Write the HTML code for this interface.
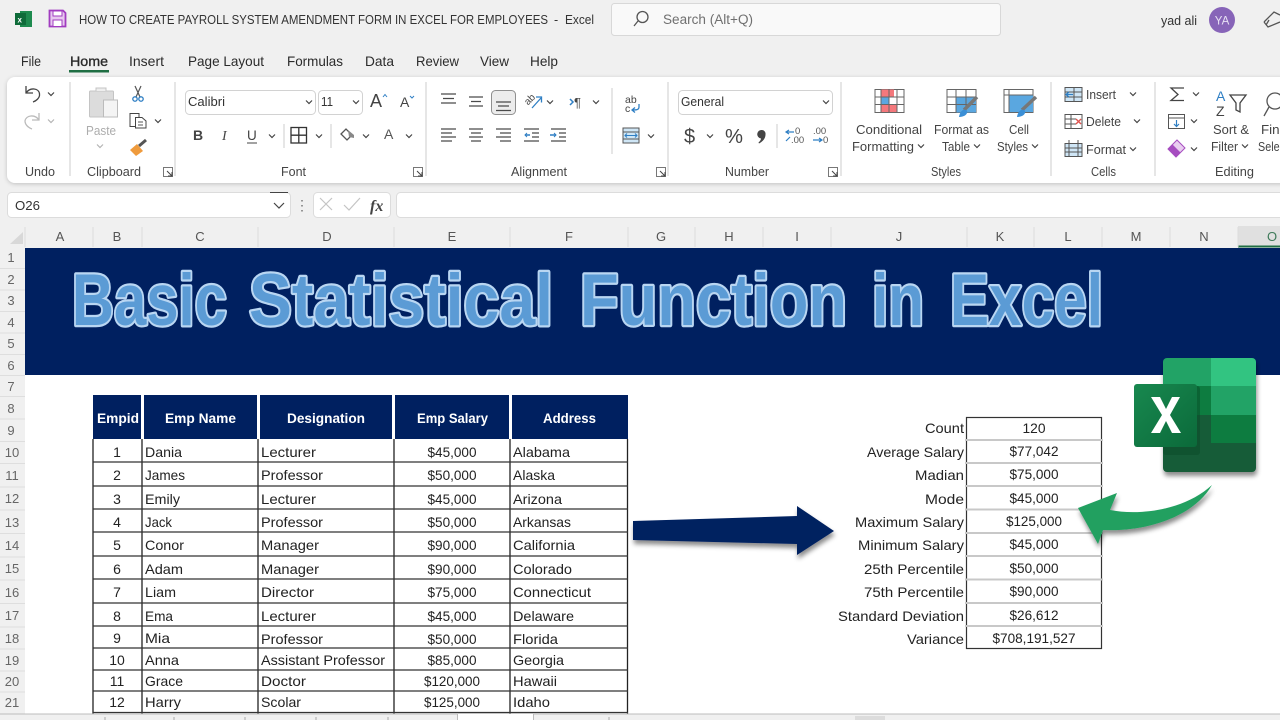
<!DOCTYPE html>
<html><head><meta charset="utf-8"><title>Excel</title>
<style>
html,body{margin:0;padding:0;width:1280px;height:720px;overflow:hidden;background:#fff}
svg{display:block;position:absolute;left:0;top:0}
text{font-family:"Liberation Sans",sans-serif;font-size:13px;fill:#333}
.t{font-size:14px;fill:#2b2b2b}
.r{font-size:12.5px;fill:#444}
.l{font-size:12.5px;fill:#444}
.h{font-size:13px;fill:#555;text-anchor:middle}
.n{font-size:13px;fill:#666;text-anchor:middle}
.d{font-size:14px;fill:#222}
.m{font-size:14px;fill:#222;text-anchor:middle}
.e{font-size:14px;fill:#222;text-anchor:end}
.w{font-size:14px;font-weight:bold;fill:#fff}
.ti{font-size:73px;font-weight:bold;fill:#5b9bd5;stroke:#b9d6f2;stroke-width:4.500px;paint-order:stroke;stroke-linejoin:round}
.ic{fill:none;stroke:#555;stroke-width:1.3}
.bl{fill:none;stroke:#444;stroke-width:1.3}
</style></head><body>
<svg width="1280" height="720" viewBox="0 0 1280 720" xmlns="http://www.w3.org/2000/svg">
<defs>
<path id="c" d="M-3-1.500 0 1.500 3-1.500" fill="none" stroke="#444" stroke-width="1.200"/>
<g id="dl"><path d="M-4.500-4.500H4.500V4.500H-4.500Z" fill="none" stroke="#777"/><path d="M-1-1 4 4M4 0V4H0" fill="none" stroke="#444"/></g>
<filter id="s1" x="-20%" y="-20%" width="140%" height="160%"><feDropShadow dx="1" dy="4" stdDeviation="2.500" flood-color="#000" flood-opacity=".45"/></filter>
<filter id="s3" x="-5%" y="-20%" width="110%" height="140%"><feDropShadow dx="0" dy="1" stdDeviation="2" flood-color="#000" flood-opacity=".2"/></filter>
<linearGradient id="xg" x1="0" y1="0" x2="1" y2="1"><stop offset="0" stop-color="#18884f"/><stop offset="1" stop-color="#0b6a3a"/></linearGradient>
</defs>

<!-- window background -->
<rect width="1280" height="248" fill="#f0f0f0"/>

<!-- title bar -->
<rect x="20" y="11" width="12" height="16" fill="#1d8a4e"/><rect x="15" y="13" width="11" height="12" fill="#0e6b39"/>
<text x="17.500" y="22.500" style="font-size:8px;font-weight:bold;fill:#fff">x</text>
<path d="M49.500 10.500H63L65.500 13V26.500H49.500Z" fill="#e7c8ef" stroke="#a13cc0" stroke-width="1.800"/>
<rect x="53" y="11" width="9" height="5" fill="#fff" stroke="#a13cc0"/><rect x="53" y="20" width="9" height="6.500" fill="#fff" stroke="#a13cc0"/>
<text x="79" y="24" textLength="469" lengthAdjust="spacingAndGlyphs" style="font-size:12.500px;fill:#333">HOW TO CREATE PAYROLL SYSTEM AMENDMENT FORM IN EXCEL FOR EMPLOYEES</text>
<text x="554" y="24" style="font-size:12.500px;fill:#333">-</text>
<text x="565" y="24" textLength="29" lengthAdjust="spacingAndGlyphs" style="font-size:12.500px;fill:#333">Excel</text>
<rect x="611.500" y="3.500" width="389" height="32" rx="3" fill="#f9f9f9" stroke="#d8d8d8"/>
<circle cx="642.500" cy="17" r="5.500" class="ic"/><path d="M638 21 634 26" class="ic"/>
<text x="663" y="24" textLength="90" lengthAdjust="spacingAndGlyphs" style="font-size:13.500px;fill:#707070">Search (Alt+Q)</text>
<text x="1161" y="25" textLength="36" lengthAdjust="spacingAndGlyphs" style="font-size:12.500px;fill:#333">yad ali</text>
<circle cx="1222" cy="20" r="13" fill="#8764b8"/>
<text x="1222" y="24.500" text-anchor="middle" style="font-size:11.500px;fill:#e8e0f4">YA</text>
<path d="M1264 22 1274 12 1280 15M1264 22 1268 27 1280 22M1266 25 1269 20" class="ic"/>

<!-- tabs -->
<text x="21" y="66" class="t" textLength="20" lengthAdjust="spacingAndGlyphs">File</text>
<text x="70" y="66" class="t" textLength="38" lengthAdjust="spacingAndGlyphs" style="stroke:#2b2b2b;stroke-width:.35px">Home</text>
<rect x="69" y="70" width="40" height="2.500" fill="#1f6e43"/>
<text x="129" y="66" class="t" textLength="35" lengthAdjust="spacingAndGlyphs">Insert</text>
<text x="188" y="66" class="t" textLength="76" lengthAdjust="spacingAndGlyphs">Page Layout</text>
<text x="287" y="66" class="t" textLength="56" lengthAdjust="spacingAndGlyphs">Formulas</text>
<text x="365" y="66" class="t" textLength="29" lengthAdjust="spacingAndGlyphs">Data</text>
<text x="416" y="66" class="t" textLength="43" lengthAdjust="spacingAndGlyphs">Review</text>
<text x="480" y="66" class="t" textLength="29" lengthAdjust="spacingAndGlyphs">View</text>
<text x="530" y="66" class="t" textLength="28" lengthAdjust="spacingAndGlyphs">Help</text>

<!-- ribbon panel -->
<rect x="7" y="77" width="1290" height="106" rx="8" fill="#fff" filter="url(#s3)"/>
<g stroke="#d6d6d6" stroke-width="1.200">
<path d="M70 82V176M175 82V176M426 82V176M668 82V176M841 82V176M1051 82V176M1155 82V176"/>
<path d="M284 124V148M331 124V148M612 88V154M777 124V148"/></g>

<!-- ribbon labels -->
<text x="25" y="176" class="l" textLength="30" lengthAdjust="spacingAndGlyphs">Undo</text>
<text x="87" y="176" class="l" textLength="54" lengthAdjust="spacingAndGlyphs">Clipboard</text>
<text x="281" y="176" class="l" textLength="25" lengthAdjust="spacingAndGlyphs">Font</text>
<text x="511" y="176" class="l" textLength="56" lengthAdjust="spacingAndGlyphs">Alignment</text>
<text x="725" y="176" class="l" textLength="44" lengthAdjust="spacingAndGlyphs">Number</text>
<text x="931" y="176" class="l" textLength="30" lengthAdjust="spacingAndGlyphs">Styles</text>
<text x="1091" y="176" class="l" textLength="25" lengthAdjust="spacingAndGlyphs">Cells</text>
<text x="1215" y="176" class="l" textLength="39" lengthAdjust="spacingAndGlyphs">Editing</text>
<use href="#dl" x="168" y="172"/><use href="#dl" x="418" y="172"/><use href="#dl" x="661" y="172"/><use href="#dl" x="833" y="172"/>

<!-- undo -->
<path d="M26 86V93H33M26 93C30 87 39 88 39.500 94C40 98 36 101 33 102" class="bl"/>
<use href="#c" x="51" y="94"/>
<path d="M39 113V120H32M39 120C35 114 26 115 25 121C25 125 29 128 32 129" fill="none" stroke="#bbb" stroke-width="1.300"/>
<use href="#c" x="51" y="121" opacity=".4"/>

<!-- clipboard -->
<rect x="89.500" y="91" width="24" height="26" rx="1" fill="#dcdcdc" stroke="#c4c4c4"/>
<path d="M96 91V88H106V91" fill="#eee" stroke="#c4c4c4"/>
<rect x="103.500" y="100" width="14" height="17" fill="#f4f4f4" stroke="#bbb"/>
<text x="86" y="135" textLength="30" lengthAdjust="spacingAndGlyphs" style="font-size:12.500px;fill:#adadad">Paste</text>
<use href="#c" x="100" y="146" opacity=".4"/>
<path d="M135 86 140 97M141 86 136 97" stroke="#555" fill="none" stroke-width="1.200"/>
<circle cx="135" cy="99" r="2.200" fill="none" stroke="#2f7fc4" stroke-width="1.300"/><circle cx="141" cy="99" r="2.200" fill="none" stroke="#2f7fc4" stroke-width="1.300"/>
<rect x="130" y="113.500" width="9" height="13" fill="#fff" stroke="#444"/><path d="M135.500 117.500H142L146 121V128H135.500Z" fill="#fff" stroke="#444"/>
<path d="M138 122H143M138 125H143" stroke="#555"/>
<use href="#c" x="158" y="121"/>
<path d="M130 150 137 144 143 151 136 156Z" fill="#ef9b3d"/><path d="M139 146 146 140" stroke="#555" stroke-width="3"/>

<!-- font -->
<rect x="185.500" y="90.500" width="130" height="24" rx="4" fill="#fff" stroke="#d2d2d2"/>
<rect x="318.500" y="90.500" width="44" height="24" rx="4" fill="#fff" stroke="#d2d2d2"/>
<text x="188" y="106" textLength="37" lengthAdjust="spacingAndGlyphs" style="font-size:12.500px;fill:#333">Calibri</text>
<text x="321" y="106" textLength="12" lengthAdjust="spacingAndGlyphs" style="font-size:12.500px;fill:#333">11</text>
<use href="#c" x="309" y="102"/><use href="#c" x="356" y="102"/>
<text x="370" y="107" style="font-size:18px;fill:#444">A</text><path d="M383 97 385 94.500 387 97" fill="none" stroke="#2f7fc4"/>
<text x="400" y="107" style="font-size:14px;fill:#444">A</text><path d="M410 96 412 98 414 96" fill="none" stroke="#2f7fc4"/>
<text x="193" y="140" style="font-size:14px;font-weight:bold;fill:#444">B</text>
<text x="222" y="140" style="font-size:14px;font-style:italic;font-family:'Liberation Serif',serif;fill:#444">I</text>
<text x="247" y="140" style="font-size:13.500px;fill:#444">U</text><path d="M247 143H257" stroke="#444"/>
<use href="#c" x="272" y="136"/>
<rect x="291" y="127.500" width="15.500" height="15.500" fill="none" stroke="#333" stroke-width="1.300"/><path d="M298.800 127.500V143M291 135.200H306.500" stroke="#333" stroke-width="1.300"/>
<use href="#c" x="319" y="136"/>
<path d="M341 134 346 129 352 135 347 140Z" class="ic"/><path d="M348 130 354 135V138L349 137Z" fill="#888"/>
<use href="#c" x="366" y="136"/>
<text x="384" y="139" style="font-size:14px;fill:#555">A</text>
<use href="#c" x="409" y="136"/>

<!-- alignment -->
<rect x="491.500" y="90.500" width="24" height="24" rx="4" fill="#ececec" stroke="#8f8f8f"/>
<g stroke="#4a4a4a" stroke-width="1.200">
<path d="M441 94H456M443 98.500H454M441 103H456"/>
<path d="M469 97H483M471 101.500H481M469 106H483"/>
<path d="M496 102H511M498 106H509M496 110.500H511"/>
<path d="M441 129H456M441 133H452M441 137H456M441 141H452"/>
<path d="M469 129H483M471 133H481M469 137H483M471 141H481"/>
<path d="M496 129H511M500 133H511M496 137H511M500 141H511"/>
<path d="M524 129H539M532 133H539M532 137H539M524 141H539"/>
<path d="M551 129H566M559 133H566M559 137H566M551 141H566"/>
</g>
<path d="M525 135H530M550 135H556" stroke="#2f7fc4" stroke-width="1.500"/>
<path d="M527 133 525 135 527 137M554 133 556 135 554 137" fill="none" stroke="#2f7fc4"/>
<text x="524" y="104" style="font-size:10px;fill:#444" transform="rotate(-45 528 100)">ab</text>
<path d="M532 108 541 98M536 97H541.500V102.500" fill="none" stroke="#2f7fc4" stroke-width="1.300"/>
<use href="#c" x="550" y="102"/>
<path d="M570 99 573 102 570 105" fill="none" stroke="#2f7fc4" stroke-width="1.500"/>
<text x="574" y="107" style="font-size:13px;fill:#444">¶</text>
<use href="#c" x="596" y="102"/>
<text x="625" y="103" style="font-size:10.500px;fill:#444">ab</text><text x="625" y="112" style="font-size:10.500px;fill:#444">c</text>
<path d="M639 104V107C639 110 636 110 632 110M635 107.500 632 110 635 112.500" fill="none" stroke="#2f7fc4" stroke-width="1.300"/>
<rect x="623" y="128" width="16" height="15" fill="#cfe6f6" stroke="#555"/>
<path d="M623 132H639M623 139H639" stroke="#555"/><path d="M625 135.500H637M627 133.500 625 135.500 627 137.500M635 133.500 637 135.500 635 137.500" fill="none" stroke="#2f7fc4"/>
<use href="#c" x="651" y="136"/>

<!-- number -->
<rect x="678.500" y="90.500" width="154" height="24" rx="4" fill="#fff" stroke="#d2d2d2"/>
<text x="681" y="106" textLength="43" lengthAdjust="spacingAndGlyphs" style="font-size:13px;fill:#333">General</text>
<use href="#c" x="826" y="102"/>
<text x="684" y="143" style="font-size:20px;fill:#444">$</text><use href="#c" x="710" y="136"/>
<text x="725" y="143" textLength="18" lengthAdjust="spacingAndGlyphs" style="font-size:20px;fill:#444">%</text>
<path d="M762 130A3.800 3.800 0 0 1 765.500 134.500C765.500 139 762 142 759 143.500L758.500 142.500C760 141 761 140 761 138.500A4 4 0 0 1 762 130Z" fill="#444"/>
<path d="M794 132H786M789 130 786 132 789 134M786 141 790 137" fill="none" stroke="#2f7fc4" stroke-width="1.200"/>
<text x="795" y="134" style="font-size:9.500px;fill:#555">0</text><text x="791" y="143" style="font-size:9.500px;fill:#555">.00</text>
<text x="813" y="134" style="font-size:9.500px;fill:#555">.00</text><text x="823" y="143" style="font-size:9.500px;fill:#555">0</text>
<path d="M813 140H822M819 138 822 140 819 142" fill="none" stroke="#2f7fc4" stroke-width="1.200"/>

<!-- styles -->
<rect x="875" y="89.500" width="29" height="23" fill="#fff" stroke="#666"/>
<path d="M881 89.500H894V97H881ZM881 104H897V112H881Z" fill="#f4787c"/><rect x="881" y="97" width="8" height="7" fill="#5aa7e0"/>
<path d="M881 89.500V112.500M889 89.500V112.500M897 89.500V112.500M875 97H904M875 104.500H904" stroke="#666" fill="none"/>
<rect x="947" y="89.500" width="29" height="23" fill="#fff" stroke="#666"/>
<rect x="956" y="97" width="20" height="15.500" fill="#5aa7e0"/>
<path d="M956 89.500V112.500M966 89.500V112.500M947 97H976M947 104.500H976" stroke="#666" fill="none"/>
<path d="M977 97 964 110" stroke="#777" stroke-width="3.500"/><path d="M959 117C960 110 965 108 967 111 968 115 963 117 959 117Z" fill="#3a8fd6"/>
<rect x="1004" y="89.500" width="29" height="23" fill="#fff" stroke="#666"/>
<rect x="1009" y="95" width="24" height="17" fill="#5aa7e0"/>
<path d="M1004 95H1033M1009 89.500V112.500" stroke="#666" fill="none"/>
<path d="M1036 97 1022 110" stroke="#777" stroke-width="3.500"/><path d="M1017 117C1018 110 1023 108 1025 111 1026 115 1021 117 1017 117Z" fill="#3a8fd6"/>
<text x="856" y="134" class="r" textLength="66" lengthAdjust="spacingAndGlyphs">Conditional</text>
<text x="852" y="151" class="r" textLength="62" lengthAdjust="spacingAndGlyphs">Formatting</text><use href="#c" x="921" y="146"/>
<text x="934" y="134" class="r" textLength="55" lengthAdjust="spacingAndGlyphs">Format as</text>
<text x="942" y="151" class="r" textLength="28" lengthAdjust="spacingAndGlyphs">Table</text><use href="#c" x="977" y="146"/>
<text x="1009" y="134" class="r" textLength="20" lengthAdjust="spacingAndGlyphs">Cell</text>
<text x="997" y="151" class="r" textLength="31" lengthAdjust="spacingAndGlyphs">Styles</text><use href="#c" x="1035" y="146"/>

<!-- cells -->
<rect x="1065" y="87.500" width="17" height="14" fill="#cfe6f6" stroke="#555"/><path d="M1074 87.500V101.500M1065 92H1082M1065 97H1082" stroke="#555"/><path d="M1073 94.500H1066M1069 92 1066 94.500 1069 97" fill="none" stroke="#2f7fc4" stroke-width="1.300"/>
<rect x="1065" y="114.500" width="17" height="14" fill="#fff" stroke="#555"/><path d="M1065 119H1076M1065 124H1076M1071 114.500V128.500" stroke="#555"/><path d="M1076 119 1081 124M1081 119 1076 124" stroke="#e0534f" stroke-width="1.400"/>
<rect x="1065" y="143.500" width="17" height="13" fill="#cfe6f6" stroke="#555"/><path d="M1069 140V157M1078 140V157M1065 148H1082M1065 152H1082" stroke="#555"/>
<text x="1086" y="99" class="r" textLength="30" lengthAdjust="spacingAndGlyphs">Insert</text><use href="#c" x="1133" y="94"/>
<text x="1086" y="126" class="r" textLength="35" lengthAdjust="spacingAndGlyphs">Delete</text><use href="#c" x="1137" y="121"/>
<text x="1086" y="154" class="r" textLength="40" lengthAdjust="spacingAndGlyphs">Format</text><use href="#c" x="1133" y="149"/>

<!-- editing -->
<path d="M1184 88H1171L1178 94.500 1171 100.500H1184" class="bl"/><use href="#c" x="1196" y="94"/>
<rect x="1168.500" y="114.500" width="16" height="14" fill="#fff" stroke="#555"/><path d="M1168.500 118H1184.500" stroke="#555"/><path d="M1176.500 120V126M1174 124 1176.500 126.500 1179 124" fill="none" stroke="#2f7fc4" stroke-width="1.200"/>
<use href="#c" x="1194" y="121"/>
<path d="M1168 149 1177 140 1185 148 1176 157Z" fill="#e9cdf0" stroke="#a64cc0"/><path d="M1168 149 1172.500 144.500 1180.500 152.500 1176 157Z" fill="#a64cc0"/>
<use href="#c" x="1194" y="149"/>
<text x="1216" y="101" style="font-size:14px;fill:#2f7fc4">A</text><text x="1216" y="116" style="font-size:14px;fill:#444">Z</text>
<path d="M1230 95H1246L1240 103V112L1236 110V103Z" class="bl"/>
<circle cx="1275" cy="101" r="8" class="ic"/><path d="M1269 107 1264 116" class="ic"/>
<text x="1213" y="134" class="r" textLength="36" lengthAdjust="spacingAndGlyphs">Sort &amp;</text>
<text x="1211" y="151" class="r" textLength="27" lengthAdjust="spacingAndGlyphs">Filter</text><use href="#c" x="1245" y="146"/>
<text x="1261" y="134" class="r" textLength="26" lengthAdjust="spacingAndGlyphs">Find</text>
<text x="1258" y="151" class="r" textLength="30" lengthAdjust="spacingAndGlyphs">Select</text>

<!-- formula bar -->
<rect x="7.500" y="192.500" width="283" height="25" rx="4" fill="#fff" stroke="#dcdcdc"/>
<text x="15" y="210" textLength="25" lengthAdjust="spacingAndGlyphs" style="font-size:13px;fill:#333">O26</text>
<path d="M270 192.500H288" stroke="#444"/><path d="M274 203 279 208 284 203" fill="none" stroke="#444" stroke-width="1.200"/>
<path d="M302 200V201.500M302 205V206.500M302 210V211.500" stroke="#777" stroke-width="1.500"/>
<rect x="313.500" y="192.500" width="77" height="25" rx="4" fill="#fff" stroke="#dcdcdc"/>
<path d="M320 198 332 210M332 198 320 210M344 205 349 210 360 198" fill="none" stroke="#c4c4c4" stroke-width="1.200"/>
<text x="370" y="211" style="font-family:'Liberation Serif',serif;font-style:italic;font-weight:bold;font-size:16px;fill:#444">fx</text>
<rect x="396.500" y="192.500" width="890" height="25" rx="4" fill="#fff" stroke="#dcdcdc"/>

<!-- column headers -->
<path d="M10 244 23 232V244Z" fill="#d8d8d8"/>
<rect x="1238" y="226" width="42" height="21" fill="#e0e0e0"/>
<rect x="1238" y="245.500" width="42" height="2" fill="#1f6e43"/>
<path d="M25 227V247M93 227V247M142 227V247M258 227V247M394 227V247M510 227V247M628 227V247M695 227V247M763 227V247M831 227V247M967 227V247M1034 227V247M1102 227V247M1170 227V247M1238 227V247" stroke="#dcdcdc"/>
<text x="60" y="241" class="h">A</text><text x="117" y="241" class="h">B</text><text x="200" y="241" class="h">C</text><text x="327" y="241" class="h">D</text><text x="452" y="241" class="h">E</text><text x="569" y="241" class="h">F</text><text x="661" y="241" class="h">G</text><text x="729" y="241" class="h">H</text><text x="797" y="241" class="h">I</text><text x="899" y="241" class="h">J</text><text x="1000" y="241" class="h">K</text><text x="1068" y="241" class="h">L</text><text x="1136" y="241" class="h">M</text><text x="1204" y="241" class="h">N</text><text x="1272" y="241" style="font-size:13px;fill:#3f7a5a" text-anchor="middle">O</text>

<!-- row headers -->
<rect y="248" width="25" height="466" fill="#f0f0f0"/>
<path d="M0 268.500H25M0 290H25M0 311.500H25M0 333H25M0 354.500H25M0 375.500H25M0 396.500H25M0 419H25M0 441.500H25M0 463.500H25M0 487H25M0 510H25M0 533.500H25M0 557H25M0 580H25M0 603.500H25M0 627H25M0 649H25M0 671H25M0 692H25" stroke="#dedede"/>
<g>
<text x="11" y="262" class="n">1</text><text x="11" y="284" class="n">2</text><text x="11" y="305" class="n">3</text><text x="11" y="327" class="n">4</text><text x="11" y="348" class="n">5</text><text x="11" y="370" class="n">6</text><text x="11" y="391" class="n">7</text><text x="11" y="413" class="n">8</text><text x="11" y="435" class="n">9</text><text x="12" y="457" class="n">10</text><text x="12" y="480" class="n">11</text><text x="12" y="503" class="n">12</text><text x="12" y="527" class="n">13</text><text x="12" y="550" class="n">14</text><text x="12" y="573" class="n">15</text><text x="12" y="597" class="n">16</text><text x="12" y="620" class="n">17</text><text x="12" y="643" class="n">18</text><text x="12" y="665" class="n">19</text><text x="12" y="686" class="n">20</text><text x="12" y="707" class="n">21</text>
</g>

<!-- banner -->
<rect x="25" y="248" width="1255" height="127" fill="#002060"/>
<text x="72" y="325" class="ti" textLength="155" lengthAdjust="spacingAndGlyphs">Basic</text>
<text x="249" y="325" class="ti" textLength="304" lengthAdjust="spacingAndGlyphs">Statistical</text>
<text x="580" y="325" class="ti" textLength="267" lengthAdjust="spacingAndGlyphs">Function</text>
<text x="872" y="325" class="ti" textLength="52" lengthAdjust="spacingAndGlyphs">in</text>
<text x="950" y="325" class="ti" textLength="153" lengthAdjust="spacingAndGlyphs">Excel</text>

<!-- table header -->
<g fill="#002060"><rect x="93" y="395" width="48" height="44"/><rect x="144" y="395" width="113" height="44"/><rect x="260" y="395" width="132" height="44"/><rect x="395" y="395" width="114" height="44"/><rect x="512" y="395" width="116" height="44"/></g>
<text x="97" y="423" class="w" textLength="42" lengthAdjust="spacingAndGlyphs">Empid</text>
<text x="165" y="423" class="w" textLength="71" lengthAdjust="spacingAndGlyphs">Emp Name</text>
<text x="287" y="423" class="w" textLength="78" lengthAdjust="spacingAndGlyphs">Designation</text>
<text x="417" y="423" class="w" textLength="71" lengthAdjust="spacingAndGlyphs">Emp Salary</text>
<text x="543" y="423" class="w" textLength="53" lengthAdjust="spacingAndGlyphs">Address</text>

<!-- table grid -->
<path d="M93 439V713.500M142 439V713.500M258 439V713.500M394 439V713.500M510 439V713.500M627.500 439V713.500" stroke="#222" stroke-width="1.300"/>
<path d="M93 462H628M93 486H628M93 509H628M93 532H628M93 556H628M93 579H628M93 603H628M93 626H628M93 648H628M93 670H628M93 691H628M93 712.500H628" stroke="#333" stroke-width="1.300"/>

<!-- table rows -->
<text x="117" y="457" class="m">1</text><text x="145" y="457" class="d" textLength="37" lengthAdjust="spacingAndGlyphs">Dania</text><text x="261" y="457" class="d" textLength="55" lengthAdjust="spacingAndGlyphs">Lecturer</text><text x="452" y="457" class="m" textLength="49" lengthAdjust="spacingAndGlyphs">$45,000</text><text x="513" y="457" class="d" textLength="57" lengthAdjust="spacingAndGlyphs">Alabama</text>
<text x="117" y="480" class="m">2</text><text x="145" y="480" class="d" textLength="40" lengthAdjust="spacingAndGlyphs">James</text><text x="261" y="480" class="d" textLength="62" lengthAdjust="spacingAndGlyphs">Professor</text><text x="452" y="480" class="m" textLength="49" lengthAdjust="spacingAndGlyphs">$50,000</text><text x="513" y="480" class="d" textLength="42" lengthAdjust="spacingAndGlyphs">Alaska</text>
<text x="117" y="504" class="m">3</text><text x="145" y="504" class="d" textLength="35" lengthAdjust="spacingAndGlyphs">Emily</text><text x="261" y="504" class="d" textLength="55" lengthAdjust="spacingAndGlyphs">Lecturer</text><text x="452" y="504" class="m" textLength="49" lengthAdjust="spacingAndGlyphs">$45,000</text><text x="513" y="504" class="d" textLength="49" lengthAdjust="spacingAndGlyphs">Arizona</text>
<text x="117" y="527" class="m">4</text><text x="145" y="527" class="d" textLength="27" lengthAdjust="spacingAndGlyphs">Jack</text><text x="261" y="527" class="d" textLength="62" lengthAdjust="spacingAndGlyphs">Professor</text><text x="452" y="527" class="m" textLength="49" lengthAdjust="spacingAndGlyphs">$50,000</text><text x="513" y="527" class="d" textLength="58" lengthAdjust="spacingAndGlyphs">Arkansas</text>
<text x="117" y="550" class="m">5</text><text x="145" y="550" class="d" textLength="39" lengthAdjust="spacingAndGlyphs">Conor</text><text x="261" y="550" class="d" textLength="58" lengthAdjust="spacingAndGlyphs">Manager</text><text x="452" y="550" class="m" textLength="49" lengthAdjust="spacingAndGlyphs">$90,000</text><text x="513" y="550" class="d" textLength="62" lengthAdjust="spacingAndGlyphs">California</text>
<text x="117" y="574" class="m">6</text><text x="145" y="574" class="d" textLength="38" lengthAdjust="spacingAndGlyphs">Adam</text><text x="261" y="574" class="d" textLength="58" lengthAdjust="spacingAndGlyphs">Manager</text><text x="452" y="574" class="m" textLength="49" lengthAdjust="spacingAndGlyphs">$90,000</text><text x="513" y="574" class="d" textLength="59" lengthAdjust="spacingAndGlyphs">Colorado</text>
<text x="117" y="597" class="m">7</text><text x="145" y="597" class="d" textLength="31" lengthAdjust="spacingAndGlyphs">Liam</text><text x="261" y="597" class="d" textLength="53" lengthAdjust="spacingAndGlyphs">Director</text><text x="452" y="597" class="m" textLength="49" lengthAdjust="spacingAndGlyphs">$75,000</text><text x="513" y="597" class="d" textLength="78" lengthAdjust="spacingAndGlyphs">Connecticut</text>
<text x="117" y="621" class="m">8</text><text x="145" y="621" class="d" textLength="28" lengthAdjust="spacingAndGlyphs">Ema</text><text x="261" y="621" class="d" textLength="55" lengthAdjust="spacingAndGlyphs">Lecturer</text><text x="452" y="621" class="m" textLength="49" lengthAdjust="spacingAndGlyphs">$45,000</text><text x="513" y="621" class="d" textLength="61" lengthAdjust="spacingAndGlyphs">Delaware</text>
<text x="117" y="643" class="m">9</text><text x="145" y="643" class="d" textLength="25" lengthAdjust="spacingAndGlyphs">Mia</text><text x="261" y="644" class="d" textLength="62" lengthAdjust="spacingAndGlyphs">Professor</text><text x="452" y="644" class="m" textLength="49" lengthAdjust="spacingAndGlyphs">$50,000</text><text x="513" y="644" class="d" textLength="45" lengthAdjust="spacingAndGlyphs">Florida</text>
<text x="117" y="665" class="m">10</text><text x="145" y="665" class="d" textLength="34" lengthAdjust="spacingAndGlyphs">Anna</text><text x="261" y="665" class="d" textLength="124" lengthAdjust="spacingAndGlyphs">Assistant Professor</text><text x="452" y="665" class="m" textLength="49" lengthAdjust="spacingAndGlyphs">$85,000</text><text x="513" y="665" class="d" textLength="51" lengthAdjust="spacingAndGlyphs">Georgia</text>
<text x="117" y="686" class="m">11</text><text x="145" y="686" class="d" textLength="38" lengthAdjust="spacingAndGlyphs">Grace</text><text x="261" y="686" class="d" textLength="45" lengthAdjust="spacingAndGlyphs">Doctor</text><text x="452" y="686" class="m" textLength="56" lengthAdjust="spacingAndGlyphs">$120,000</text><text x="513" y="686" class="d" textLength="44" lengthAdjust="spacingAndGlyphs">Hawaii</text>
<text x="117" y="707" class="m">12</text><text x="145" y="707" class="d" textLength="36" lengthAdjust="spacingAndGlyphs">Harry</text><text x="261" y="707" class="d" textLength="40" lengthAdjust="spacingAndGlyphs">Scolar</text><text x="452" y="707" class="m" textLength="56" lengthAdjust="spacingAndGlyphs">$125,000</text><text x="513" y="707" class="d" textLength="37" lengthAdjust="spacingAndGlyphs">Idaho</text>

<!-- stats -->
<rect x="966.500" y="417.500" width="135" height="231" fill="none" stroke="#333" stroke-width="1.200"/>
<path d="M965 440H1103M965 463H1103M965 486H1103M965 509.500H1103M965 533H1103M965 556H1103M965 579.500H1103M965 603H1103M965 626H1103" stroke="#c8c8c8" stroke-width="2"/>
<text x="964" y="433" class="e" textLength="39" lengthAdjust="spacingAndGlyphs">Count</text><text x="1034" y="433" class="m" textLength="23" lengthAdjust="spacingAndGlyphs">120</text>
<text x="964" y="457" class="e" textLength="97" lengthAdjust="spacingAndGlyphs">Average Salary</text><text x="1034" y="456" class="m" textLength="49" lengthAdjust="spacingAndGlyphs">$77,042</text>
<text x="964" y="480" class="e" textLength="49" lengthAdjust="spacingAndGlyphs">Madian</text><text x="1034" y="479" class="m" textLength="49" lengthAdjust="spacingAndGlyphs">$75,000</text>
<text x="964" y="504" class="e" textLength="39" lengthAdjust="spacingAndGlyphs">Mode</text><text x="1034" y="503" class="m" textLength="49" lengthAdjust="spacingAndGlyphs">$45,000</text>
<text x="964" y="527" class="e" textLength="109" lengthAdjust="spacingAndGlyphs">Maximum Salary</text><text x="1034" y="526" class="m" textLength="56" lengthAdjust="spacingAndGlyphs">$125,000</text>
<text x="964" y="550" class="e" textLength="106" lengthAdjust="spacingAndGlyphs">Minimum Salary</text><text x="1034" y="549" class="m" textLength="49" lengthAdjust="spacingAndGlyphs">$45,000</text>
<text x="964" y="574" class="e" textLength="100" lengthAdjust="spacingAndGlyphs">25th Percentile</text><text x="1034" y="573" class="m" textLength="49" lengthAdjust="spacingAndGlyphs">$50,000</text>
<text x="964" y="597" class="e" textLength="100" lengthAdjust="spacingAndGlyphs">75th Percentile</text><text x="1034" y="596" class="m" textLength="49" lengthAdjust="spacingAndGlyphs">$90,000</text>
<text x="964" y="621" class="e" textLength="126" lengthAdjust="spacingAndGlyphs">Standard Deviation</text><text x="1034" y="620" class="m" textLength="49" lengthAdjust="spacingAndGlyphs">$26,612</text>
<text x="964" y="644" class="e" textLength="57" lengthAdjust="spacingAndGlyphs">Variance</text><text x="1034" y="643" class="m" textLength="83" lengthAdjust="spacingAndGlyphs">$708,191,527</text>

<!-- navy arrow -->
<path d="M633 521 797 516V506L834 531 797 555V544L633 540Z" fill="#002060" filter="url(#s1)"/>

<!-- excel logo -->
<g filter="url(#s1)">
<path d="M1167 358H1211V386H1163V362A4 4 0 0 1 1167 358Z" fill="#21a366"/>
<path d="M1211 358H1252A4 4 0 0 1 1256 362V386H1211Z" fill="#33c481"/>
<rect x="1163" y="386" width="48" height="29" fill="#107c41"/>
<rect x="1211" y="386" width="45" height="29" fill="#21a366"/>
<rect x="1163" y="415" width="48" height="28" fill="#185c37"/>
<rect x="1211" y="415" width="45" height="28" fill="#107c41"/>
<path d="M1163 443H1256V468A4 4 0 0 1 1252 472H1167A4 4 0 0 1 1163 468Z" fill="#185c37"/>
</g>
<rect x="1163" y="386" width="37" height="69" rx="3" fill="#0a4a28" opacity=".5"/>
<rect x="1134" y="384" width="63" height="63" rx="3" fill="url(#xg)"/>
<path d="M1151 397H1160L1166 409 1172 397H1180L1170 415 1181 433H1172L1166 421 1160 433H1151L1162 415Z" fill="#fff"/>

<!-- green arrow -->
<path d="M1078 508 1117 493 1110 510C1140 516 1185 510 1212 485 1195 515 1150 532 1103 530L1098 544Z" fill="#20a060" filter="url(#s1)"/>

<!-- sheet tabs -->
<rect y="714" width="1280" height="6" fill="#f0f0f0"/>
<path d="M0 714H1280" stroke="#bcbcbc"/>
<rect x="458" y="714" width="76" height="6" fill="#fff"/>
<path d="M457.500 714V720M533.500 714V720" stroke="#bcbcbc"/>
<path d="M105 717V720M174 717V720M245 717V720M316 717V720M388 717V720M609 717V720" stroke="#aaa"/>
<rect x="855" y="716" width="30" height="4" fill="#dcdcdc"/>
</svg>
</body></html>
